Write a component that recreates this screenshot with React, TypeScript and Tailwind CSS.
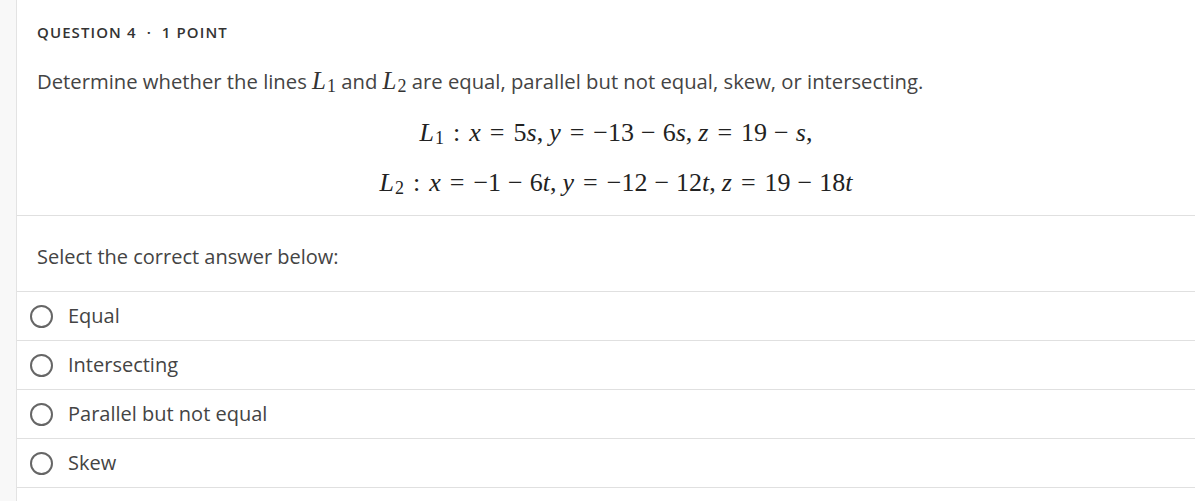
const sans = { fontFamily: '"Open Sans", "Noto Sans", sans-serif' };

function V({ children }: { children: React.ReactNode }) {
  return <i className="italic">{children}</i>;
}

function Sub({ children }: { children: React.ReactNode }) {
  return <sub className="text-[18px] not-italic relative -bottom-[3px] ml-[1px]">{children}</sub>;
}

// relation (=, :) spacing
function Rel({ children }: { children: React.ReactNode }) {
  return <span className="mx-[9px]">{children}</span>;
}

// binary operator spacing
function Bin({ children }: { children: React.ReactNode }) {
  return <span className="mx-[7px]">{children}</span>;
}

function Comma() {
  return <span className="mr-[6px]">,</span>;
}

const options = ["Equal", "Intersecting", "Parallel but not equal", "Skew"];

export default function App() {
  return (
    <div className="flex min-h-screen w-full bg-white text-[#333]" style={sans}>
      <div className="w-[17px] shrink-0 bg-[#f8f8f8] border-r border-[#e3e3e3]" />
      <div className="flex-1">
        <section className="h-[216px] border-b border-[#e0e0e0] pl-5 pt-[22px]">
          <div className="text-[15px] leading-5 font-semibold tracking-[1.1px] text-[#333]">
            QUESTION 4 <span className="mx-[5px]">·</span> 1 POINT
          </div>
          <p className="mt-[25px] text-[20.25px] leading-[28px] text-[#444]">
            Determine whether the lines{" "}
            <span className="font-['Liberation_Serif',serif] text-[25px] text-[#333]">
              <V>L</V>
              <Sub>1</Sub>
            </span>{" "}
            and{" "}
            <span className="font-['Liberation_Serif',serif] text-[25px] text-[#333]">
              <V>L</V>
              <Sub>2</Sub>
            </span>{" "}
            are equal, parallel but not equal, skew, or intersecting.
          </p>
          <div className="font-['Liberation_Serif',serif] text-[26px] text-[#222] text-center mt-[13px] leading-[50px]">
            <div>
              <V>L</V>
              <Sub>1</Sub>
              <Rel>:</Rel>
              <V>x</V>
              <Rel>=</Rel>5<V>s</V>
              <Comma />
              <V>y</V>
              <Rel>=</Rel>−13<Bin>−</Bin>6<V>s</V>
              <Comma />
              <V>z</V>
              <Rel>=</Rel>19<Bin>−</Bin>
              <V>s</V>,
            </div>
            <div>
              <V>L</V>
              <Sub>2</Sub>
              <Rel>:</Rel>
              <V>x</V>
              <Rel>=</Rel>−1<Bin>−</Bin>6<V>t</V>
              <Comma />
              <V>y</V>
              <Rel>=</Rel>−12<Bin>−</Bin>12<V>t</V>
              <Comma />
              <V>z</V>
              <Rel>=</Rel>19<Bin>−</Bin>18<V>t</V>
            </div>
          </div>
        </section>
        <section className="h-[76px] border-b border-[#e0e0e0] pl-5 flex items-center">
          <p className="text-[20px] leading-[28px] text-[#444] pt-[6px]">Select the correct answer below:</p>
        </section>
        {options.map((o) => (
          <label
            key={o}
            className="h-[49px] border-b border-[#e0e0e0] flex items-center pl-[13px] gap-[15px] cursor-pointer"
          >
            <span className="w-[23px] h-[23px] rounded-full border-2 border-[#666] bg-white shrink-0" />
            <span className="text-[20px] leading-[28px] text-[#444]">{o}</span>
          </label>
        ))}
      </div>
    </div>
  );
}
